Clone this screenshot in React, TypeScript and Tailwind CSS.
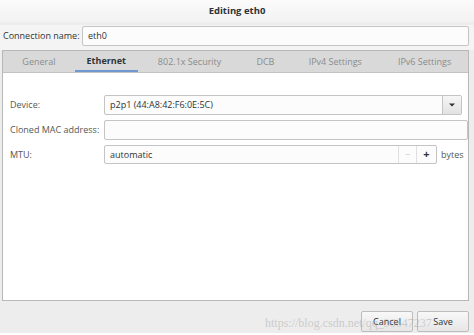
import React from 'react';

const tabs = ['General', 'Ethernet', '802.1x Security', 'DCB', 'IPv4 Settings', 'IPv6 Settings'];

export default function App() {
  return (
    <div className="relative w-[474px] h-[335px] overflow-hidden bg-[#ededed] flex flex-col text-[9px] text-[#2e3436]" style={{ fontFamily: '"Open Sans", "Liberation Sans", sans-serif' }}>
      {/* title bar */}
      <div className="h-[22px] shrink-0 flex items-center justify-center bg-gradient-to-b from-[#fbfbfb] to-[#f2f2f2] font-bold text-[9.5px]">
        Editing eth0
      </div>

      {/* connection name */}
      <div className="mt-[3px] h-[21px] shrink-0 flex items-center pl-[3px] pr-[5px] bg-[#f4f4f4]">
        <span className="w-[79px]">Connection name:</span>
        <div className="flex-1 h-[20px] bg-[#fcfcfc] border border-[#c4c4c4] rounded-[2px] flex items-center px-[5px]">eth0</div>
      </div>
      <div className="h-[4px] shrink-0 bg-[#f4f4f4]" />

      {/* notebook */}
      <div className="ml-[2px] mr-[5px] flex-1 flex flex-col border border-[#b8b8b8] bg-white">
        <div className="h-[22px] shrink-0 flex items-stretch bg-[#d9d9d9] border-b border-[#c2c2c2]">
          {tabs.map((t, i) => (
            <div
              key={t}
              className={
                i === 1
                  ? 'flex items-center justify-center font-bold text-[#2e3436] border-b-2 border-[#6e98cf]'
                  : 'flex items-center justify-center text-[#8a8c8a]'
              }
              style={{ width: [72, 63, 104, 48, 92, 87][i] }}
            >
              {t}
            </div>
          ))}
        </div>

        <div className="flex-1 pt-[22px] pl-[7px] flex flex-col gap-[5px]">
          <div className="flex items-center h-[20px]">
            <span className="w-[94px] text-[#555753]">Device:</span>
            <div className="w-[358px] h-[20px] flex border border-[#c4c4c4] rounded-[2px] bg-[#fcfcfc]">
              <div className="flex-1 flex items-center px-[5px]">p2p1 (44:A8:42:F6:0E:5C)</div>
              <div className="w-[19px] flex items-center justify-center border-l border-[#c4c4c4] bg-gradient-to-b from-[#f6f6f6] to-[#e2e2e2]">
                <svg width="6" height="4" viewBox="0 0 6 4"><path d="M0 0.5 L6 0.5 L3 3.5 Z" fill="#2e3436" /></svg>
              </div>
            </div>
          </div>

          <div className="flex items-center h-[20px]">
            <span className="w-[94px] text-[#555753]">Cloned MAC address:</span>
            <div className="w-[364px] h-[20px] border border-[#c4c4c4] rounded-[2px] bg-[#fcfcfc]" />
          </div>

          <div className="flex items-center h-[19px]">
            <span className="w-[94px] text-[#555753]">MTU:</span>
            <div className="w-[333px] h-[19px] flex border border-[#c4c4c4] rounded-[2px] bg-[#fcfcfc]">
              <div className="flex-1 flex items-center px-[5px]">automatic</div>
              <div className="w-[18px] flex items-center justify-center border-l border-[#e0e0e0] text-[#c8c8c8]">−</div>
              <div className="w-[20px] flex items-center justify-center border-l border-[#e0e0e0] font-bold text-[11px]">+</div>
            </div>
            <span className="ml-[4px] text-[#555753]">bytes</span>
          </div>
        </div>
      </div>

      {/* footer */}
      <div className="h-[34px] shrink-0 flex items-start justify-end gap-[4px] pr-[5px] pt-[10px] border-b-[2px] border-white">
        <button className="w-[52px] h-[21px] border border-[#bdbdbd] rounded-[2px] bg-gradient-to-b from-[#f8f8f8] to-[#e6e6e6] text-[#2e3436]">Cancel</button>
        <button className="w-[52px] h-[21px] border border-[#bdbdbd] rounded-[2px] bg-gradient-to-b from-[#f8f8f8] to-[#e6e6e6] text-[#2e3436]">Save</button>
      </div>

      {/* watermark */}
      <span className="absolute left-[265px] top-[314px] text-[12px] text-[#9a9a9a] opacity-40 whitespace-nowrap" style={{ fontFamily: '"Liberation Serif", serif' }}>
        https://blog.csdn.net/qq_36647237
      </span>
    </div>
  );
}
